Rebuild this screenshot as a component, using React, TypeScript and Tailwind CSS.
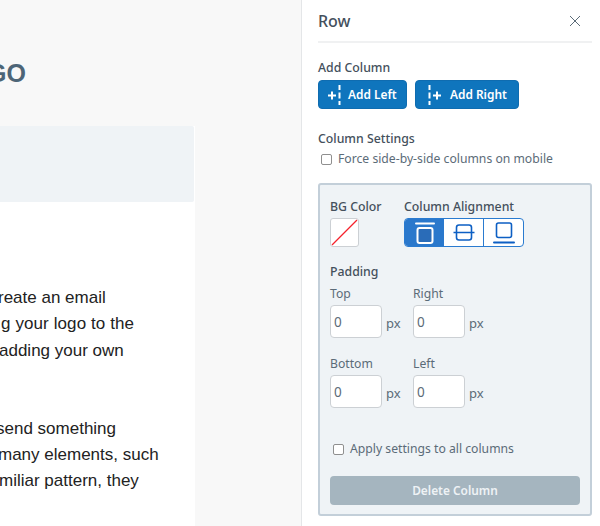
const panelFont = { fontFamily: '"Noto Sans", sans-serif' };

function AddLeftIcon() {
  return (
    <svg width="14" height="20" viewBox="0 0 14 20" fill="none" stroke="#fff" strokeWidth="2">
      <path d="M0 10.5h8M4 6.5v8" />
      <path d="M11.5 0v5M11.5 7.5v6M11.5 16v4" />
    </svg>
  );
}

function AddRightIcon() {
  return (
    <svg width="14" height="20" viewBox="0 0 14 20" fill="none" stroke="#fff" strokeWidth="2">
      <path d="M1.5 0v5M1.5 7.5v6M1.5 16v4" />
      <path d="M5 10.5h8M9 6.5v8" />
    </svg>
  );
}

function PaddingField({ label, className }: { label: string; className?: string }) {
  return (
    <div className={className}>
      <div className="text-[12.2px] leading-[16px] text-[#5b6b78]">{label}</div>
      <div className="mt-[3px] flex items-end">
        <div className="flex h-[33px] w-[52px] items-center rounded-[4px] border border-[#ccd0d4] bg-white pl-[3px] pt-[2px] text-[13.5px] text-[#5b6b78]">
          0
        </div>
        <span className="ml-[4px] pb-[6px] text-[13px] leading-[18px] text-[#5b6b78]">px</span>
      </div>
    </div>
  );
}

function Canvas() {
  return (
    <div className="h-[526px] w-[302px] shrink-0 overflow-hidden border-r border-[#e4e6e8] bg-[#f8f8f8]">
      <div
        className="ml-[-13px] mt-[58px] h-[30px] text-[25px] leading-[30px] font-bold text-[#4d6577]"
        style={{ fontFamily: '"Liberation Sans", sans-serif' }}
      >
        GO
      </div>
      <div className="mt-[38px] h-[400px] w-[195px] bg-white">
        <div className="h-[76px] w-[194px] rounded-br-[2px] rounded-tr-[2px] bg-[#eff3f6]" />
        <div
          className="whitespace-nowrap pt-[83px] text-[17px] leading-[26.3px] text-[#222]"
          style={{ fontFamily: '"Liberation Sans", sans-serif' }}
        >
          <div className="ml-[-2px]">reate an email</div>
          <div className="ml-[1px] tracking-[0.1px]">g your logo to the</div>
          <div className="ml-[-1px]">adding your own</div>
          <div className="mt-[52px] ml-[-4px]">send something</div>
          <div className="ml-[-2px]">many elements, such</div>
          <div className="ml-[-1px]">miliar pattern, they</div>
        </div>
      </div>
    </div>
  );
}

function Panel() {
  return (
    <div className="h-[526px] flex-1 bg-white pl-[16px] pr-[8px]" style={panelFont}>
      <div className="flex h-[43px] items-center justify-between border-b-2 border-[#f0f1f2]">
        <span className="text-[16px] font-medium text-[#44505c]">Row</span>
        <svg className="mr-[11px]" width="12" height="12" viewBox="0 0 12 12" stroke="#5b6b78" strokeWidth="1">
          <path d="M1 1l10 10M11 1L1 11" />
        </svg>
      </div>

      <div className="mt-[17px] text-[12.3px] leading-[16px] font-medium text-[#44505c]">Add Column</div>
      <div className="mt-[4px] flex gap-[8px]">
        <button className="flex h-[29px] w-[89px] items-center rounded-[4px] border border-[#0f6cb0] bg-[#0f75bd] pl-[9px] text-[11.9px] font-semibold text-white">
          <AddLeftIcon />
          <span className="ml-[6px]">Add Left</span>
        </button>
        <button className="flex h-[29px] w-[104px] items-center rounded-[4px] border border-[#0f6cb0] bg-[#0f75bd] pl-[12px] text-[11.9px] font-semibold text-white">
          <AddRightIcon />
          <span className="ml-[8px]">Add Right</span>
        </button>
      </div>

      <div className="mt-[22px] text-[12.3px] leading-[16px] font-medium text-[#44505c]">Column Settings</div>
      <label className="mt-[4px] flex items-center pl-[3px] text-[12.2px] leading-[16px] text-[#5b6b78]">
        <span className="h-[11px] w-[11px] rounded-[2px] border border-[#8f8f8f] bg-white" />
        <span className="ml-[6px]">Force side-by-side columns on mobile</span>
      </label>

      <div className="mt-[16px] h-[333px] w-[274px] rounded-[3px] border-2 border-[#c3cfd9] bg-[#eff3f6] px-[10px] pt-[14px]">
        <div className="flex">
          <div className="w-[74px]">
            <div className="text-[12.3px] leading-[16px] font-medium text-[#44505c]">BG Color</div>
            <div className="mt-[3px] h-[29px] w-[29px] overflow-hidden rounded-[3px] border border-[#ccd0d4] bg-white">
              <svg width="27" height="27" viewBox="0 0 27 27">
                <path d="M1 26L26 1" stroke="#f5222d" strokeWidth="1.3" />
              </svg>
            </div>
          </div>
          <div>
            <div className="text-[12.3px] leading-[16px] font-medium text-[#44505c]">Column Alignment</div>
            <div className="mt-[3px] flex h-[29px] w-[120px] overflow-hidden rounded-[4px] border border-[#2a7bd0] bg-white">
              <div className="flex w-[39px] items-center justify-center bg-[#2a78cc]">
                <svg width="22" height="24" viewBox="0 0 22 24" fill="none" stroke="#fff">
                  <path d="M2 2.5h18" strokeWidth="2" strokeLinecap="round" />
                  <rect x="3.5" y="7" width="15" height="15" rx="2" fill="#2a6cb8" strokeWidth="2" />
                </svg>
              </div>
              <div className="flex w-[40px] items-center justify-center border-r border-[#2a7bd0]">
                <svg width="22" height="20" viewBox="0 0 22 20" fill="none" stroke="#0d5fc4">
                  <rect x="3.5" y="2" width="15" height="15" rx="2.5" strokeWidth="1.6" />
                  <path d="M0.5 9.5h21" strokeWidth="1.6" />
                </svg>
              </div>
              <div className="flex flex-1 items-center justify-center">
                <svg width="22" height="24" viewBox="0 0 22 24" fill="none" stroke="#0d5fc4">
                  <rect x="3.5" y="2" width="15" height="14.5" rx="2" strokeWidth="1.6" />
                  <path d="M1 21.5h20" strokeWidth="2" strokeLinecap="round" />
                </svg>
              </div>
            </div>
          </div>
        </div>

        <div className="mt-[17px] text-[12.3px] leading-[16px] font-medium text-[#44505c]">Padding</div>
        <div className="mt-[6px] grid grid-cols-[83px_1fr] gap-y-[18px]">
          <PaddingField label="Top" />
          <PaddingField label="Right" />
          <PaddingField label="Bottom" />
          <PaddingField label="Left" />
        </div>

        <label className="mt-[33px] flex items-center pl-[3px] text-[12.2px] leading-[16px] text-[#5b6b78]">
          <span className="h-[11px] w-[11px] rounded-[2px] border border-[#8f8f8f] bg-white" />
          <span className="ml-[6px]">Apply settings to all columns</span>
        </label>

        <button className="mt-[19px] flex h-[29px] w-[250px] items-center justify-center rounded-[4px] bg-[#a5b5bf] text-[11.9px] font-semibold text-[#eef2f5]">
          Delete Column
        </button>
      </div>
    </div>
  );
}

export default function App() {
  return (
    <div className="flex h-[526px] w-[600px] overflow-hidden bg-white">
      <Canvas />
      <Panel />
    </div>
  );
}
